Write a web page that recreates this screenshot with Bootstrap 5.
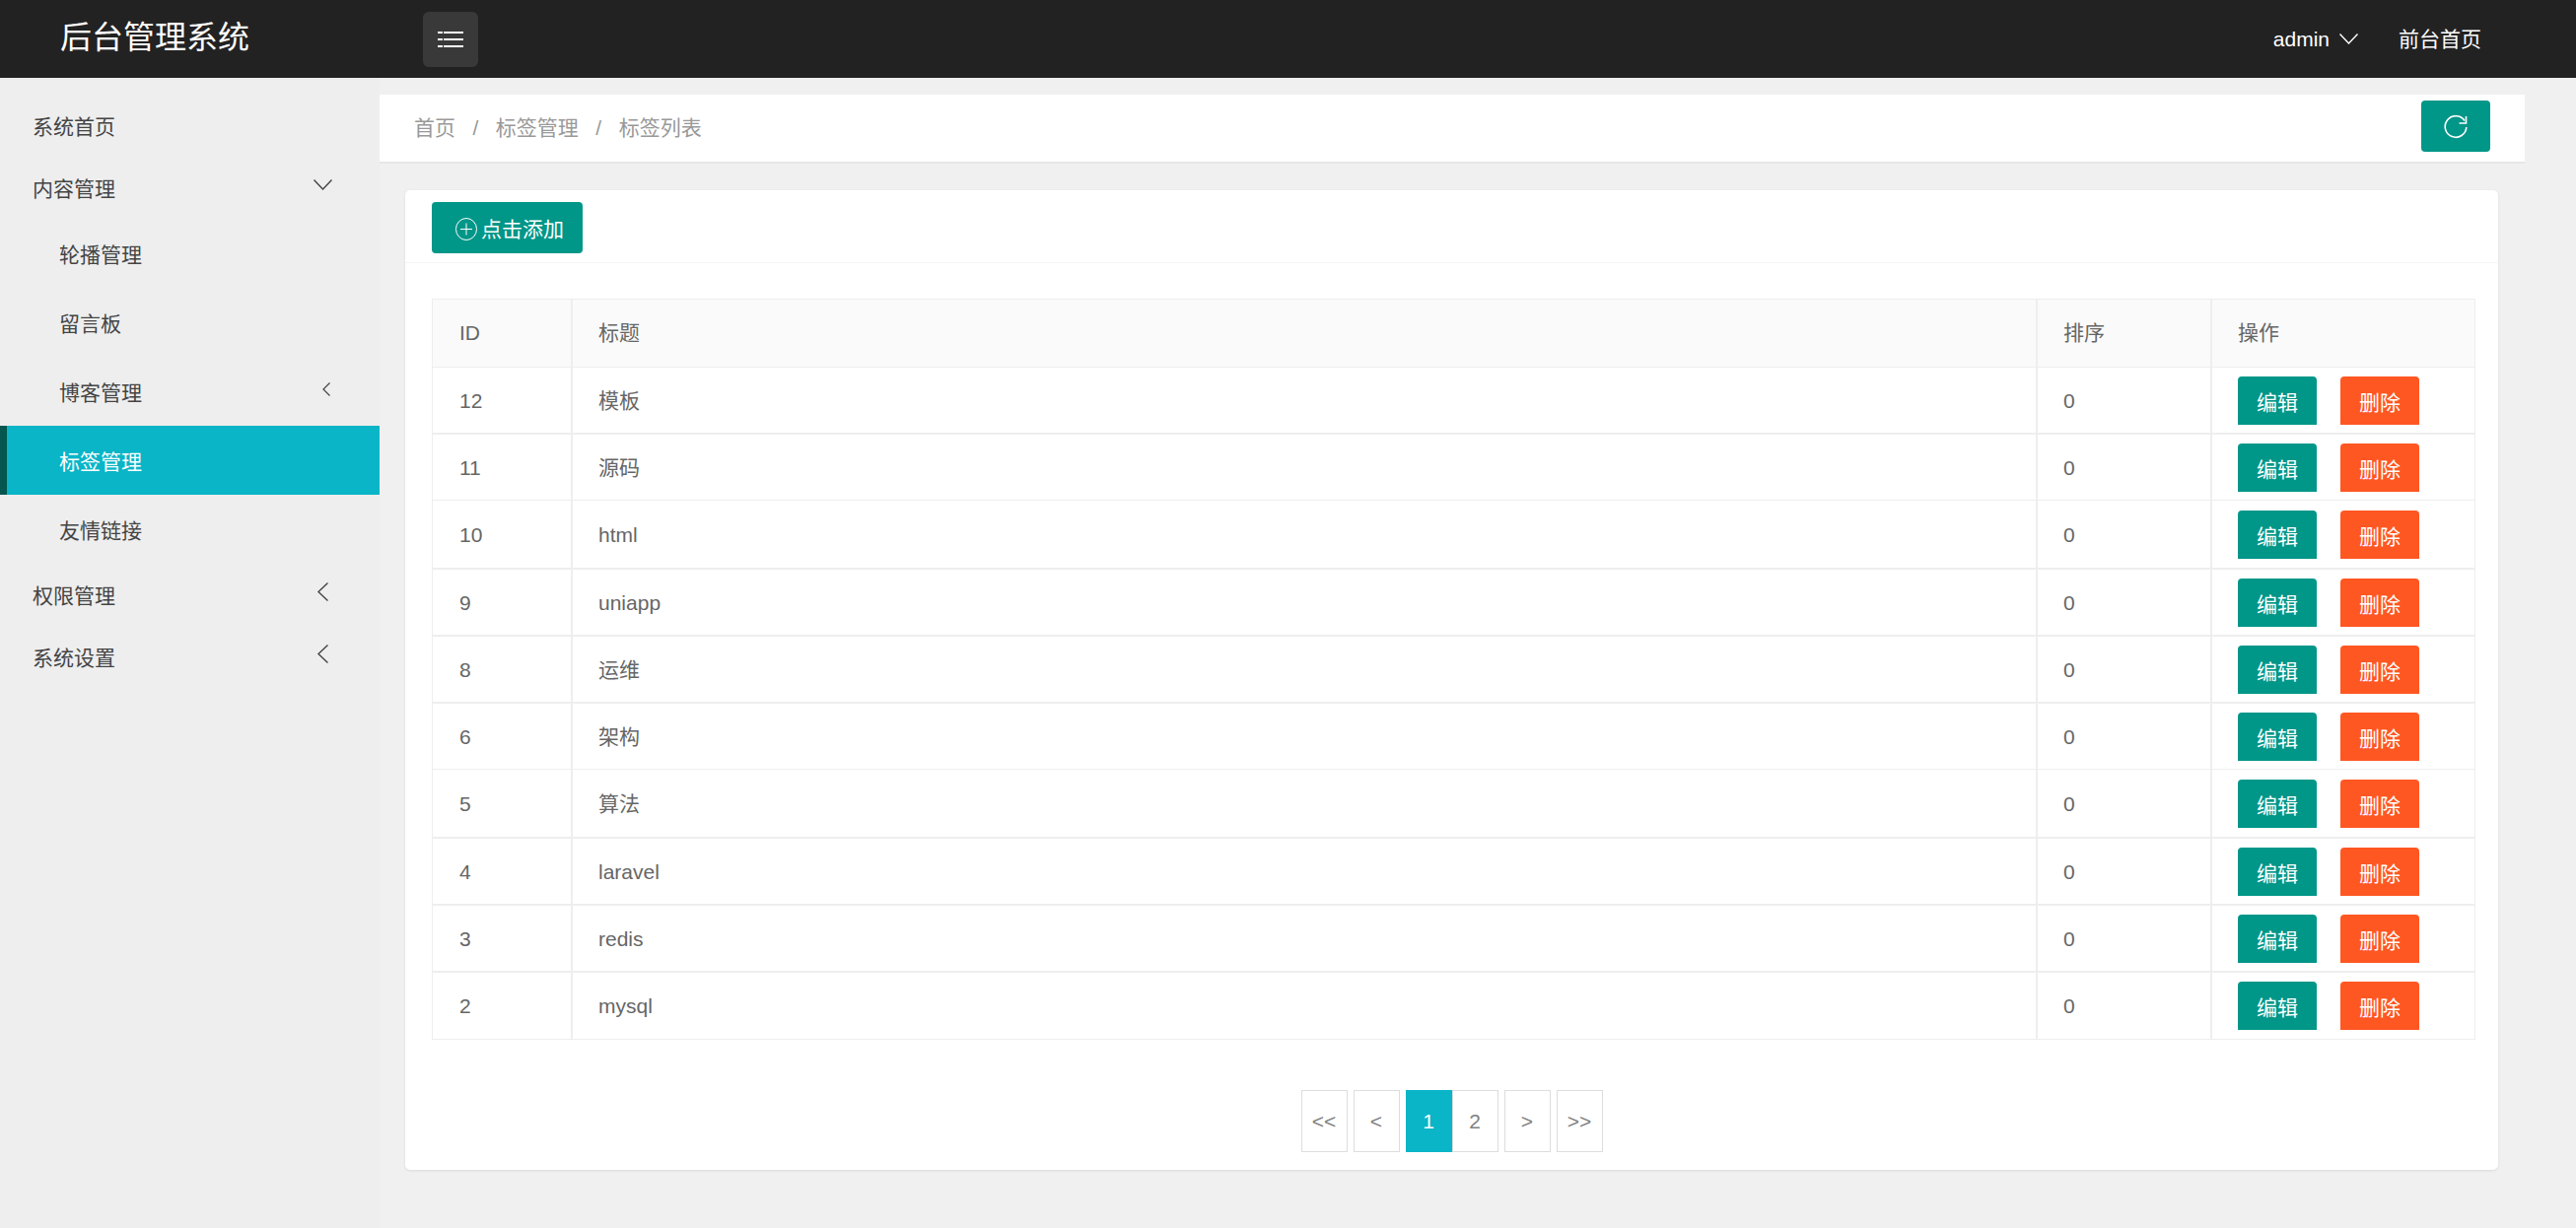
<!DOCTYPE html>
<html lang="zh-CN">
<head>
<meta charset="utf-8">
<title>后台管理系统</title>
<link href="https://cdn.jsdelivr.net/npm/bootstrap@5.3.0/dist/css/bootstrap.min.css" rel="stylesheet">
<style>
html,body{height:100%}
body{background:#f0f0f0;font-family:"Liberation Sans","Noto Sans CJK SC",sans-serif;font-size:21px;color:#666;overflow:hidden}
.top-bar{height:79px;background:#222;color:#fff}
.brand-title{width:429px;padding-left:61px;padding-bottom:3px;font-size:32px;line-height:1;color:#fff;text-decoration:none}
.toggle-btn{width:56px;height:56px;background:#393939;border:0;border-radius:6px;--bs-btn-padding-x:0;--bs-btn-padding-y:0}
.top-user{color:#fff;text-decoration:none;gap:10px;margin-right:41px}
.top-home{color:#fff;text-decoration:none;margin-right:96px}
.shell{height:calc(100% - 79px)}
.side-menu{width:385px;background:#eee;padding-top:19px;flex:none}
.menu-row{height:63px;padding-left:33px;color:#444;text-decoration:none}
.menu-row.row-up{padding-bottom:2px}
.menu-row.row-down{padding-top:2px}
.menu-sub{margin-top:-2px}
.menu-row.sub-row{height:70px;padding-left:60px;padding-top:3px}
.menu-row.is-on{background:#09b5c7;color:#fff;border-left:7px solid #05564f;padding-left:53px}
.chev-down{margin-left:auto;margin-right:48px;margin-top:-8px}
.chev-left{margin-left:auto;margin-right:52px;margin-top:-8px}
.chev-left.small-chev{margin-right:50px;margin-top:-7px}
.main-pane{min-width:0;padding:17px 52px 0 0}
.crumb-bar{height:70px;background:#fff;border-bottom:2px solid #e6e6e6;padding:6px 0 0 35px}
.crumb-bar .breadcrumb{--bs-breadcrumb-divider-color:#999;--bs-breadcrumb-item-active-color:#999;margin:13px 0 0;line-height:1.4}
.crumb-bar .breadcrumb-item{color:#999}
.crumb-bar .breadcrumb-item a{color:#999;text-decoration:none}
.crumb-bar .breadcrumb-item+.breadcrumb-item{padding-left:17.5px}
.crumb-bar .breadcrumb-item+.breadcrumb-item::before{padding-right:17.5px;color:#999}
.teal-btn,.orange-btn{color:#fff;border:0;font-size:21px;--bs-btn-hover-color:#fff}
.teal-btn,.teal-btn:hover{background:#009688}
.orange-btn,.orange-btn:hover{background:#ff5722}
.reload-btn{width:70px;height:52px;border-radius:4px;padding:2px 0 0;margin-right:35px}
.data-card{margin:27px 27px 0 26px;background:#fff;border:0;border-radius:5px;box-shadow:0 1px 3px rgba(0,0,0,.09)}
.card-top{height:74px;padding:12px 27px;border-bottom:1px solid #f5f5f5}
.add-btn{height:52px;border-radius:4px;padding:2px 19px 0 24px;gap:4px;line-height:1}
.card-main{padding:36px 23px 18px 27px}
.tag-table{width:2073px;table-layout:fixed;border-collapse:separate;border-spacing:0;margin:0;color:#666;border-top:1px solid #eee}
.tag-table>:not(caption)>*>*{padding:0 0 0 26px;vertical-align:middle;color:#666;font-weight:400;border-bottom:2px solid #eee;border-right:2px solid #eee;height:68px;box-shadow:none;background:#fff}
.tag-table>tbody>tr>td{padding-top:1px}
.tag-table>thead>tr>th{height:69px;background:#fafafa;border-bottom-width:1px}
.tag-table>:not(caption)>*>*:first-child{border-left:1px solid #eee;padding-left:27px}
.tag-table>:not(caption)>*>*:last-child{border-right:1px solid #eee}
.tag-table>tbody>tr:nth-child(2)>*,.tag-table>tbody>tr:nth-child(6)>*{border-bottom-width:1px;height:67px}
.tag-table>tbody>tr:nth-child(3)>*,.tag-table>tbody>tr:nth-child(7)>*{height:70px}
.tag-table>tbody>tr:last-child>*{border-bottom-width:1px}
.tag-table>tbody>tr>td.op-cell{vertical-align:top;padding-top:9px}
.tag-table>tbody>tr:nth-child(3)>td.op-cell,.tag-table>tbody>tr:nth-child(7)>td.op-cell{padding-top:10px}
.op-btn{width:80px;height:49px;padding:5px 0 0;line-height:30px;border-radius:4px 4px 0 0}
.pager{margin:51px 0 0;gap:6px;padding-right:4px}
.pager .page-item .page-link{width:47px;height:63px;padding:0;display:flex;align-items:center;justify-content:center;font-size:21px;color:#808080;background:#fff;border:1px solid #ddd;border-radius:0;margin:0}
.pager .page-item.active .page-link{background:#09b5c7;border-color:#09b5c7;color:#fff}
.pager .page-item.active{margin-right:-6px}
</style>
</head>
<body>
<header class="top-bar d-flex align-items-center">
  <a class="brand-title" href="#">后台管理系统</a>
  <button class="btn toggle-btn d-flex align-items-center justify-content-center" type="button" aria-label="菜单">
    <svg width="26" height="16" viewBox="0 0 26 16" fill="#fff"><rect x="0" y="0" width="5" height="2"/><rect x="6" y="0" width="20" height="2"/><rect x="0" y="7" width="5" height="2"/><rect x="6" y="7" width="20" height="2"/><rect x="0" y="14" width="5" height="2"/><rect x="6" y="14" width="20" height="2"/></svg>
  </button>
  <a class="top-user ms-auto d-flex align-items-center" href="#">admin
    <svg width="19" height="11" viewBox="0 0 19 11" fill="none" stroke="#fff" stroke-width="1.4"><path d="M.5.5l9 9.500 9-9.500"/></svg>
  </a>
  <a class="top-home" href="#">前台首页</a>
</header>
<div class="shell d-flex">
  <nav class="side-menu">
    <a class="menu-row row-up d-flex align-items-center" href="#">系统首页</a>
    <a class="menu-row row-up d-flex align-items-center" href="#">内容管理
      <svg class="chev-down" width="19" height="11" viewBox="0 0 19 11" fill="none" stroke="#444" stroke-width="1.4"><path d="M.5.5l9 9.500 9-9.500"/></svg>
    </a>
    <div class="menu-sub">
      <a class="menu-row sub-row d-flex align-items-center" href="#">轮播管理</a>
      <a class="menu-row sub-row d-flex align-items-center" href="#">留言板</a>
      <a class="menu-row sub-row d-flex align-items-center" href="#">博客管理
        <svg class="chev-left small-chev" width="8" height="14" viewBox="0 0 8 14" fill="none" stroke="#444" stroke-width="1.2"><path d="M7.500.5L1 7l6.500 6.500"/></svg>
      </a>
      <a class="menu-row sub-row is-on d-flex align-items-center" href="#">标签管理</a>
      <a class="menu-row sub-row d-flex align-items-center" href="#">友情链接</a>
    </div>
    <a class="menu-row row-down d-flex align-items-center" href="#">权限管理
      <svg class="chev-left" width="11" height="19" viewBox="0 0 11 19" fill="none" stroke="#444" stroke-width="1.4"><path d="M10.500.500L1 9.500l9.500 9"/></svg>
    </a>
    <a class="menu-row row-down d-flex align-items-center" href="#">系统设置
      <svg class="chev-left" width="11" height="19" viewBox="0 0 11 19" fill="none" stroke="#444" stroke-width="1.4"><path d="M10.500.500L1 9.500l9.500 9"/></svg>
    </a>
  </nav>
  <main class="main-pane flex-fill">
    <div class="crumb-bar d-flex align-items-start justify-content-between">
      <ol class="breadcrumb">
        <li class="breadcrumb-item"><a href="#">首页</a></li>
        <li class="breadcrumb-item"><a href="#">标签管理</a></li>
        <li class="breadcrumb-item active">标签列表</li>
      </ol>
      <button class="btn teal-btn reload-btn d-flex align-items-center justify-content-center" type="button" aria-label="刷新">
        <svg width="24" height="24" viewBox="0 0 24 24" fill="none" stroke="#fff" stroke-width="1.6"><path d="M21 5.500A10.800 10.800 0 1 0 22.800 12"/><path d="M22.500 1v7h-7"/></svg>
      </button>
    </div>
    <section class="card data-card">
      <div class="card-top">
        <button class="btn teal-btn add-btn d-inline-flex align-items-center" type="button">
          <svg width="22" height="23" viewBox="0 0 22 23" fill="none" stroke="#fff" stroke-width="1"><ellipse cx="11" cy="11.500" rx="10.500" ry="11"/><path d="M11 5.500v12M5 11.500h12"/></svg>点击添加
        </button>
      </div>
      <div class="card-main">
        <table class="table tag-table">
          <colgroup><col style="width:143px"><col style="width:1486px"><col style="width:177px"><col style="width:267px"></colgroup>
          <thead><tr><th>ID</th><th>标题</th><th>排序</th><th>操作</th></tr></thead>
          <tbody>
            <tr><td>12</td><td>模板</td><td>0</td><td class="op-cell"><div class="d-flex gap-4"><button class="btn teal-btn op-btn">编辑</button><button class="btn orange-btn op-btn">删除</button></div></td></tr>
            <tr><td>11</td><td>源码</td><td>0</td><td class="op-cell"><div class="d-flex gap-4"><button class="btn teal-btn op-btn">编辑</button><button class="btn orange-btn op-btn">删除</button></div></td></tr>
            <tr><td>10</td><td>html</td><td>0</td><td class="op-cell"><div class="d-flex gap-4"><button class="btn teal-btn op-btn">编辑</button><button class="btn orange-btn op-btn">删除</button></div></td></tr>
            <tr><td>9</td><td>uniapp</td><td>0</td><td class="op-cell"><div class="d-flex gap-4"><button class="btn teal-btn op-btn">编辑</button><button class="btn orange-btn op-btn">删除</button></div></td></tr>
            <tr><td>8</td><td>运维</td><td>0</td><td class="op-cell"><div class="d-flex gap-4"><button class="btn teal-btn op-btn">编辑</button><button class="btn orange-btn op-btn">删除</button></div></td></tr>
            <tr><td>6</td><td>架构</td><td>0</td><td class="op-cell"><div class="d-flex gap-4"><button class="btn teal-btn op-btn">编辑</button><button class="btn orange-btn op-btn">删除</button></div></td></tr>
            <tr><td>5</td><td>算法</td><td>0</td><td class="op-cell"><div class="d-flex gap-4"><button class="btn teal-btn op-btn">编辑</button><button class="btn orange-btn op-btn">删除</button></div></td></tr>
            <tr><td>4</td><td>laravel</td><td>0</td><td class="op-cell"><div class="d-flex gap-4"><button class="btn teal-btn op-btn">编辑</button><button class="btn orange-btn op-btn">删除</button></div></td></tr>
            <tr><td>3</td><td>redis</td><td>0</td><td class="op-cell"><div class="d-flex gap-4"><button class="btn teal-btn op-btn">编辑</button><button class="btn orange-btn op-btn">删除</button></div></td></tr>
            <tr><td>2</td><td>mysql</td><td>0</td><td class="op-cell"><div class="d-flex gap-4"><button class="btn teal-btn op-btn">编辑</button><button class="btn orange-btn op-btn">删除</button></div></td></tr>
          </tbody>
        </table>
        <ul class="pagination pager justify-content-center">
          <li class="page-item"><a class="page-link" href="#">&lt;&lt;</a></li>
          <li class="page-item"><a class="page-link" href="#">&lt;</a></li>
          <li class="page-item active"><a class="page-link" href="#">1</a></li>
          <li class="page-item"><a class="page-link" href="#">2</a></li>
          <li class="page-item"><a class="page-link" href="#">&gt;</a></li>
          <li class="page-item"><a class="page-link" href="#">&gt;&gt;</a></li>
        </ul>
      </div>
    </section>
  </main>
</div>
<script src="https://cdn.jsdelivr.net/npm/bootstrap@5.3.0/dist/js/bootstrap.bundle.min.js"></script>
</body>
</html>
